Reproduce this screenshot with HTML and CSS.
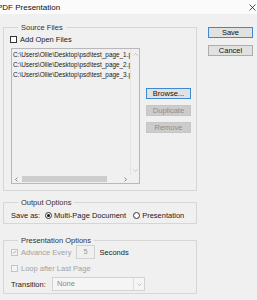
FILE: index.html
```html
<!DOCTYPE html>
<html lang="en">
<head>
	<meta charset="utf-8">
	<title>PDF Presentation</title>
	<link rel="stylesheet" href="styles.css">
</head>
<body>
	<div class="titlebar">
		<span class="title">PDF Presentation</span>
		<svg class="close" width="7" height="7" viewBox="0 0 7 7"><path d="M0.5 0.5 L6.5 6.5 M6.5 0.5 L0.5 6.5" stroke="#222" stroke-width="0.8" fill="none"/></svg>
	</div>
	<div class="dialog">
		<div class="main">
			<fieldset class="group source">
				<legend>Source Files</legend>
				<label class="check"><span class="box"></span>Add Open Files</label>
				<div class="source-body">
					<div class="filelist">
						<div class="list-top">
							<div class="items">
								<div class="item">C:\Users\Ollie\Desktop\psd\test_page_1.psd</div>
								<div class="item">C:\Users\Ollie\Desktop\psd\test_page_2.psd</div>
								<div class="item">C:\Users\Ollie\Desktop\psd\test_page_3.psd</div>
							</div>
							<div class="vscroll">
								<svg width="5" height="3" viewBox="0 0 5 3"><path d="M0.5 2.5 L2.5 0.5 L4.5 2.5" stroke="#b0b0b0" stroke-width="0.7" fill="none"/></svg>
								<svg width="5" height="3" viewBox="0 0 5 3"><path d="M0.5 0.5 L2.5 2.5 L4.5 0.5" stroke="#b0b0b0" stroke-width="0.7" fill="none"/></svg>
							</div>
						</div>
						<div class="list-bottom">
							<div class="hscroll">
								<svg width="3" height="5" viewBox="0 0 3 5"><path d="M2.5 0.5 L0.5 2.5 L2.5 4.5" stroke="#606060" stroke-width="0.7" fill="none"/></svg>
								<div class="thumb-track"><div class="thumb"></div></div>
								<svg width="3" height="5" viewBox="0 0 3 5"><path d="M0.5 0.5 L2.5 2.5 L0.5 4.5" stroke="#606060" stroke-width="0.7" fill="none"/></svg>
							</div>
							<div class="corner"></div>
						</div>
					</div>
					<div class="side-buttons">
						<button class="btn focus">Browse...</button>
						<button class="btn off">Duplicate</button>
						<button class="btn off">Remove</button>
					</div>
				</div>
			</fieldset>

			<fieldset class="group output">
				<legend>Output Options</legend>
				<div class="row">
					<span class="save-as">Save as:</span>
					<label class="radio"><span class="dot on"></span>Multi-Page Document</label>
					<label class="radio"><span class="dot"></span>Presentation</label>
				</div>
			</fieldset>

			<fieldset class="group present">
				<legend>Presentation Options</legend>
				<div class="row advance">
					<label class="check dim"><span class="box checked">
						<svg width="6" height="6" viewBox="0 0 6 6"><path d="M1 3 L2.5 4.5 L5 1.5" stroke="#a8a8a8" stroke-width="0.9" fill="none"/></svg>
					</span>Advance Every</label>
					<span class="num">5</span>
					<span class="secs">Seconds</span>
				</div>
				<div class="row loop">
					<label class="check dim"><span class="box"></span>Loop after Last Page</label>
				</div>
				<div class="row transition">
					<span class="trans-label">Transition:</span>
					<div class="select">
						<span class="select-value">None</span>
						<span class="select-arrow">
							<svg width="5" height="3" viewBox="0 0 5 3"><path d="M0.5 0.5 L2.5 2.5 L4.5 0.5" stroke="#b0b0b0" stroke-width="0.7" fill="none"/></svg>
						</span>
					</div>
				</div>
			</fieldset>
		</div>

		<div class="actions">
			<button class="btn default">Save</button>
			<button class="btn">Cancel</button>
		</div>
	</div>
</body>
</html>
```

FILE: styles.css
```css
* {
	margin: 0;
	padding: 0;
	box-sizing: border-box;
}
body {
	width: 257px;
	height: 300px;
	overflow: hidden;
	background: #f0f0f0;
	font-family: "Liberation Sans", Arial, sans-serif;
	font-size: 7.5px;
	color: #1a1a1a;
}
.titlebar {
	display: flex;
	align-items: center;
	justify-content: space-between;
	height: 14px;
	padding-right: 1px;
	background: #fbfbfb;
}
.title {
	font-size: 8px;
	margin-left: -3px;
	color: #111;
}
.close {
	display: block;
}
.dialog {
	display: flex;
	align-items: flex-start;
	gap: 11px;
	padding: 9px 0 0 3px;
}
.main {
	width: 194px;
}
.group {
	border: 1px solid #d6d6d6;
	padding: 0 5px 0 7px;
}
.group legend {
	margin-left: 7px;
	padding: 0 3px;
	line-height: 9px;
	color: #333;
}
.check {
	display: flex;
	align-items: center;
	gap: 3px;
	height: 9px;
	white-space: nowrap;
}
.box {
	display: flex;
	align-items: center;
	justify-content: center;
	width: 7px;
	height: 7px;
	border: 1px solid #333;
	background: #fff;
}
.source .check {
	margin-top: 3px;
	margin-left: -1px;
}
.source-body {
	display: flex;
	gap: 6px;
	margin-top: 4px;
	padding-bottom: 6px;
}
.filelist {
	display: flex;
	flex-direction: column;
	width: 129px;
	height: 136px;
	border: 1px solid #b8b8b8;
	background: #f0f0f0;
}
.list-top {
	display: flex;
	flex: 1;
	min-height: 0;
}
.items {
	flex: 1;
	overflow: hidden;
	padding: 1px 0 0 1px;
}
.item {
	font-size: 6.4px;
	line-height: 10px;
	white-space: nowrap;
	overflow: hidden;
	color: #222;
}
.vscroll {
	display: flex;
	flex-direction: column;
	justify-content: space-between;
	align-items: center;
	width: 9px;
	padding: 4px 0 3px;
	background: #f0f0f0;
	border-left: 1px solid #e4e4e4;
}
.list-bottom {
	display: flex;
	height: 8px;
}
.hscroll {
	display: flex;
	align-items: center;
	flex: 1;
	gap: 4px;
	padding: 0 3px;
	background: #f0f0f0;
}
.thumb-track {
	flex: 1;
	height: 100%;
	padding: 1px 13px 1px 0;
}
.thumb {
	height: 100%;
	background: #cdcdcd;
}
.corner {
	width: 9px;
	background: #f0f0f0;
}
.side-buttons {
	display: flex;
	flex-direction: column;
	gap: 6px;
	padding-top: 40px;
}
.btn {
	display: block;
	width: 45px;
	height: 11px;
	border: 1px solid #adadad;
	background: #e1e1e1;
	font-family: "Liberation Sans", Arial, sans-serif;
	font-size: 7.5px;
	line-height: 9px;
	color: #111;
}
.btn.focus,
.btn.default {
	border-color: #3c8ad5;
}
.btn.off {
	border-color: #c6c6c6;
	background: #cccccc;
	color: #8d8d8d;
}
.output {
	margin-top: 7px;
}
.row {
	display: flex;
	align-items: center;
	white-space: nowrap;
}
.output .row {
	height: 10px;
	margin: 3px 0 3px 0;
}
.save-as {
	flex-shrink: 0;
	width: 34px;
}
.radio {
	display: flex;
	flex-shrink: 0;
	align-items: center;
	gap: 2px;
	margin-right: 7px;
}
.dot {
	display: flex;
	align-items: center;
	justify-content: center;
	width: 7px;
	height: 7px;
	border: 1px solid #333;
	border-radius: 50%;
	background: #fff;
}
.dot.on::after {
	content: "";
	width: 3px;
	height: 3px;
	border-radius: 50%;
	background: #111;
}
.present {
	margin-top: 12px;
	padding-bottom: 2px;
}
.check.dim {
	color: #a2a2a2;
}
.check.dim .box {
	border-color: #c4c4c4;
	background: #f4f4f4;
}
.advance {
	height: 14px;
}
.num {
	width: 19px;
	height: 14px;
	margin-left: 5px;
	padding-left: 6px;
	border: 1px solid #d2d2d2;
	line-height: 12px;
	color: #9a9a9a;
}
.secs {
	margin-left: 4px;
	color: #222;
}
.loop {
	height: 10px;
	margin-top: 4px;
}
.transition {
	height: 14px;
	margin-top: 4px;
}
.trans-label {
	width: 41px;
	color: #222;
}
.select {
	display: flex;
	width: 93px;
	height: 14px;
	border: 1px solid #d2d2d2;
	background: #f5f5f5;
}
.select-value {
	flex: 1;
	padding-left: 4px;
	line-height: 12px;
	color: #8a8a8a;
}
.select-arrow {
	display: flex;
	align-items: center;
	justify-content: center;
	width: 11px;
	border-left: 1px solid #dedede;
}
.actions {
	display: flex;
	flex-direction: column;
	gap: 7px;
	padding-top: 4px;
}
```
